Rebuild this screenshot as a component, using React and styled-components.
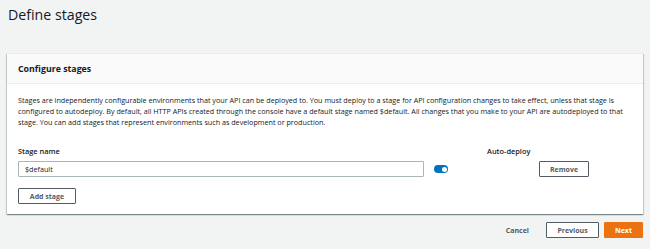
import React from "react";
import styled, { createGlobalStyle } from "styled-components";

const Global = createGlobalStyle`
  html, body { margin: 0; padding: 0; }
  body {
    background: #f2f3f3;
    font-family: "Open Sans", "Noto Sans", sans-serif;
    color: #16191f;
  }
`;

const Page = styled.div`
  width: 650px;
  height: 249px;
  box-sizing: border-box;
  padding: 5px 7px 0 7px;
  overflow: hidden;
`;

const Title = styled.h1`
  margin: 0 0 0 1px;
  font-size: 14.2px;
  line-height: 20px;
  font-weight: 400;
  color: #16191f;
`;

const Card = styled.section`
  margin-top: 28px;
  background: #fff;
  box-shadow: 0 1px 1px 0 rgba(0, 28, 36, 0.3), 1px 1px 1px 0 rgba(0, 28, 36, 0.15),
    -1px 1px 1px 0 rgba(0, 28, 36, 0.15);
  border-top: 1px solid #eaeded;
`;

const CardHeader = styled.header`
  height: 30px;
  box-sizing: border-box;
  display: flex;
  align-items: center;
  padding: 0 11px;
  background: #fafafa;
  border-bottom: 1px solid #eaeded;
`;

const CardTitle = styled.h2`
  margin: 0;
  font-size: 8.8px;
  font-weight: 700;
  color: #16191f;
`;

const CardBody = styled.div`
  padding: 11px 11px 10px 11px;
`;

const Description = styled.p`
  margin: 0;
  font-size: 7.2px;
  line-height: 11px;
  color: #16191f;
  white-space: nowrap;
`;

const StageGrid = styled.div`
  margin-top: 18px;
  display: grid;
  grid-template-columns: 406px 63px 52px 50px;
  grid-template-rows: auto auto;
  row-gap: 5px;
  align-items: center;
`;

const Label = styled.label`
  font-size: 7.4px;
  line-height: 10px;
  font-weight: 600;
  color: #16191f;
  grid-column: ${(p) => p.$col};
  white-space: nowrap;
`;

const Input = styled.input`
  grid-column: 1;
  height: 16px;
  box-sizing: border-box;
  border: 1px solid #aab7b8;
  border-radius: 1px;
  padding: 0 6px;
  font-family: inherit;
  font-size: 7.2px;
  color: #16191f;
  outline: none;
`;

const ToggleCell = styled.div`
  grid-column: 2;
  padding-left: 10px;
  display: flex;
  align-items: center;
`;

const Toggle = styled.span`
  position: relative;
  display: inline-block;
  width: 14px;
  height: 8px;
  border-radius: 4px;
  background: ${(p) => (p.$on ? "#0073bb" : "#aab7b8")};

  &::after {
    content: "";
    position: absolute;
    top: 1.5px;
    ${(p) => (p.$on ? "right: 1.5px;" : "left: 1.5px;")}
    width: 5px;
    height: 5px;
    border-radius: 50%;
    background: #fff;
  }
`;

const Button = styled.button`
  grid-column: ${(p) => p.$col || "auto"};
  height: 16px;
  box-sizing: border-box;
  padding: 0;
  border: 1px solid ${(p) => (p.$primary ? "#ec7211" : "#545b64")};
  border-radius: 1px;
  background: ${(p) => (p.$primary ? "#ec7211" : "#fff")};
  color: ${(p) => (p.$primary ? "#fff" : "#545b64")};
  font-family: inherit;
  font-size: 7px;
  font-weight: 700;
  cursor: pointer;
  width: ${(p) => (p.$w ? `${p.$w}px` : "auto")};
`;

const AddRow = styled.div`
  margin-top: 11px;
  display: flex;
`;

const Footer = styled.footer`
  margin-top: 8px;
  display: flex;
  justify-content: flex-end;
  align-items: center;
  gap: 5px;
`;

const LinkButton = styled.button`
  border: none;
  background: none;
  padding: 0;
  margin-right: 12px;
  font-family: inherit;
  font-size: 7px;
  font-weight: 700;
  color: #545b64;
  cursor: pointer;
`;

export default function App() {
  return (
    <>
      <Global />
      <Page>
        <Title>Define stages</Title>
        <Card>
          <CardHeader>
            <CardTitle>Configure stages</CardTitle>
          </CardHeader>
          <CardBody>
            <Description>
              Stages are independently configurable environments that your API can be deployed to. You must deploy to a stage for API configuration changes to take effect, unless that stage is
              <br />
              configured to autodeploy. By default, all HTTP APIs created through the console have a default stage named $default. All changes that you make to your API are autodeployed to that
              <br />
              stage. You can add stages that represent environments such as development or production.
            </Description>
            <StageGrid>
              <Label $col={1}>Stage name</Label>
              <Label $col={3}>Auto-deploy</Label>
              <Input defaultValue="$default" />
              <ToggleCell>
                <Toggle $on />
              </ToggleCell>
              <Button $col={4} $w={50}>Remove</Button>
            </StageGrid>
            <AddRow>
              <Button $w={58}>Add stage</Button>
            </AddRow>
          </CardBody>
        </Card>
        <Footer>
          <LinkButton>Cancel</LinkButton>
          <Button $w={53}>Previous</Button>
          <Button $primary $w={39}>Next</Button>
        </Footer>
      </Page>
    </>
  );
}
